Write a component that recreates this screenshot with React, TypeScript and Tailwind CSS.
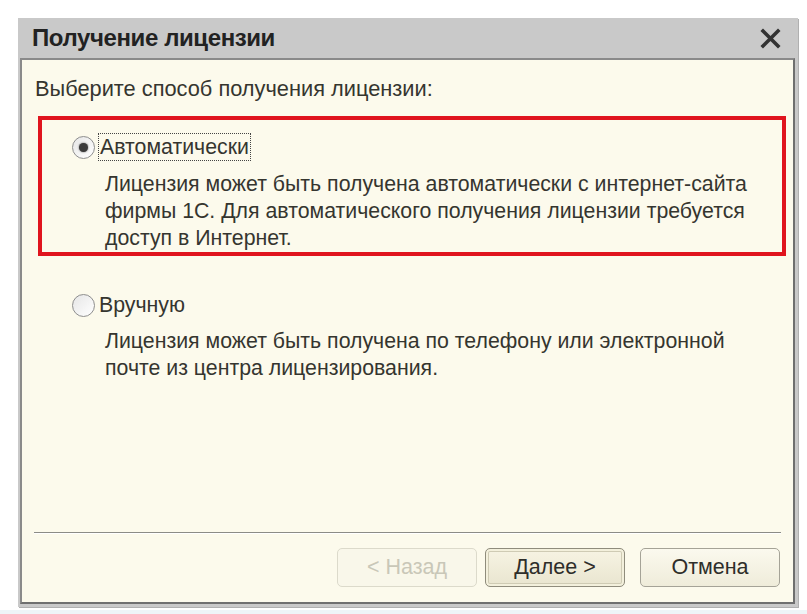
import React from 'react';

const body = { fontFamily: '"Liberation Sans", Arial, sans-serif' };

const Radio: React.FC<{ checked?: boolean }> = ({ checked }) => (
    <span className="w-[23px] h-[23px] rounded-full border border-[#8e8e8e] bg-gradient-to-br from-[#e6e6e6] to-white flex items-center justify-center shrink-0">
        {checked && <span className="w-[9px] h-[9px] rounded-full bg-[#3a3a3a] shadow-[0_0_2px_#555]" />}
    </span>
);

const Btn: React.FC<{ label: string; variant: 'disabled' | 'default' | 'normal'; className?: string }> = ({ label, variant, className }) => {
    const cls =
        variant === 'disabled'
            ? 'border-[#dcdacb] text-[#c9c7b8] bg-[#f9f7ea]'
            : variant === 'default'
            ? 'border-[#8f8c7c] text-[#2e2e2a] bg-gradient-to-b from-[#f7f4e4] to-[#e9e5cf] shadow-[inset_0_0_0_2px_#f3f0dc,inset_0_0_0_3px_#cfcbb4]'
            : 'border-[#a5a397] text-[#2e2e2a] bg-gradient-to-b from-[#fbf9ee] to-[#efecda]';
    return (
        <button className={`w-[140px] h-[39px] rounded-[5px] border text-[21.5px] flex items-center justify-center ${cls} ${className ?? ''}`} style={body}>
            {label}
        </button>
    );
};

export default function App() {
    return (
        <div className="w-[807px] h-[614px] bg-white pt-[18px] pl-[18px] relative">
            <div className="w-[780px] h-[589px] bg-[#c9c9c9] flex flex-col pl-[2px] pr-[3px] pb-[3px] shadow-[1px_1px_0_#b0b0b0]">
                <div className="h-[40px] flex items-center justify-between pl-[12px] pr-[14px]">
                    <span className="text-[24px] font-bold text-[#222] tracking-[-0.4px]" style={body}>
                        Получение лицензии
                    </span>
                    <svg width="21" height="21" viewBox="0 0 21 21">
                        <path d="M3 3 L18 18 M18 3 L3 18" stroke="#333" strokeWidth="3.6" strokeLinecap="square" />
                    </svg>
                </div>
                <div className="flex-1 bg-[#fcfaec] border-2 border-t-[#8a8a8a] border-l-[#8a8a8a] border-r-[#6f6f6f] border-b-[#6f6f6f] flex flex-col text-[#35352f]" style={body}>
                    <div className="pl-[13px] pt-[17px] text-[21.8px] leading-[24px]">Выберите способ получения лицензии:</div>

                    <div className="mt-[15px] ml-[16px] mr-[7px] h-[140px] border-[4px] border-[#e0141e] pl-[30px] pt-[12px]">
                        <div className="flex items-center h-[30px]">
                            <Radio checked />
                            <span className="ml-[3px] border border-dotted border-[#444] px-[1px] text-[21.3px] leading-[26px]">Автоматически</span>
                        </div>
                        <div className="pl-[33px] pt-[9px] text-[21.3px] leading-[27px]">
                            <div>Лицензия может быть получена автоматически с интернет-сайта</div>
                            <div>фирмы 1С. Для автоматического получения лицензии требуется</div>
                            <div>доступ в Интернет.</div>
                        </div>
                    </div>

                    <div className="pl-[50px] pt-[34px]">
                        <div className="flex items-center h-[30px]">
                            <Radio />
                            <span className="ml-[4px] text-[21.3px] leading-[26px]">Вручную</span>
                        </div>
                        <div className="pl-[33px] pt-[8px] text-[21.3px] leading-[27px]">
                            <div>Лицензия может быть получена по телефону или электронной</div>
                            <div>почте из центра лицензирования.</div>
                        </div>
                    </div>

                    <div className="flex-1" />
                    <div className="mx-[12px] h-[2px] bg-[#8c8c86] border-b border-[#fff]" />
                    <div className="flex justify-end pr-[13px] pt-[14px] pb-[15px]">
                        <Btn label="< Назад" variant="disabled" className="mr-[8px]" />
                        <Btn label="Далее >" variant="default" className="mr-[15px]" />
                        <Btn label="Отмена" variant="normal" />
                    </div>
                </div>
            </div>
            <div className="absolute left-0 bottom-0 w-full h-[4px] bg-[#eef5f8]" />
        </div>
    );
}
